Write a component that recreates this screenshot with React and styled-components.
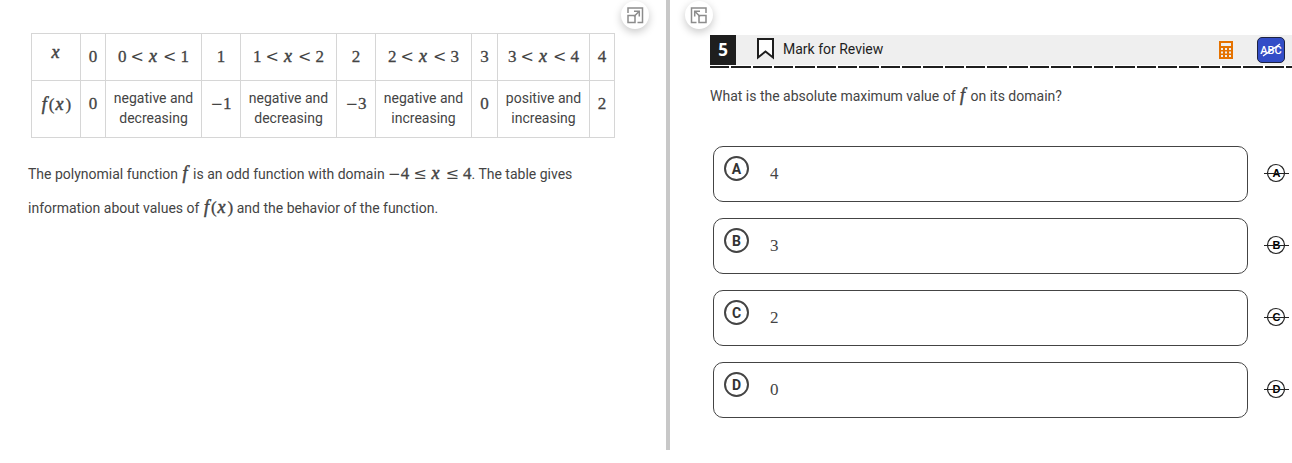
import React, { useState } from 'react';
import styled, { createGlobalStyle } from 'styled-components';

const GlobalStyle = createGlobalStyle`
  * {
    box-sizing: border-box;
  }
  body {
    margin: 0;
    background: #fff;
    color: #444;
    font-family: Roboto, sans-serif;
    font-size: 14px;
  }
  button {
    font-family: inherit;
    cursor: pointer;
  }
`;

const Page = styled.div`
  display: grid;
  grid-template-columns: 666fr 4px 622fr;
`;

const Divider = styled.div`
  background: #c8c8c8;
`;

const Panel = styled.section`
  min-width: 0;
`;

const PanelTop = styled.div`
  display: flex;
  justify-content: ${(props) => props.$align};
  height: ${(props) => props.$height};
  padding: 1px 17px 0 15px;
`;

const RoundButton = styled.button`
  display: grid;
  place-items: center;
  width: 28px;
  height: 28px;
  padding: 0;
  border: 0;
  border-radius: 50%;
  background: #fff;
  box-shadow: 0 3px 8px rgba(0, 0, 0, 0.22);
`;

const ValueTable = styled.table`
  width: 584px;
  max-width: 100%;
  margin-left: 31px;
  border-collapse: collapse;
  table-layout: fixed;
`;

const Column = styled.col`
  width: ${(props) => props.$width}px;
`;

const Row = styled.tr`
  height: ${(props) => props.$height};
`;

const Cell = styled.td`
  padding: 0 0 ${(props) => props.$lift || 0}px;
  border: 1px solid #d6d6d6;
  font-weight: 400;
  line-height: 20px;
  text-align: center;
  white-space: nowrap;
`;

const MathText = styled.span`
  font-family: 'Liberation Serif', serif;
  font-size: 17px;
  line-height: 20px;
  white-space: nowrap;
  -webkit-text-stroke: ${(props) => (props.$light ? '0' : '0.3px')} #444;
`;

const Variable = styled.i`
  margin: 0 2px 0 1px;
  font-size: 18px;
  line-height: 0;
  -webkit-text-stroke: 0.5px #444;
`;

const Relation = styled.span`
  margin: 0 4px;
  font-family: 'DejaVu Serif', serif;
  font-size: 16px;
  line-height: 0;
  -webkit-text-stroke: 0;
`;

const Minus = styled.span`
  font-family: 'DejaVu Serif', serif;
  font-size: 15px;
  line-height: 0;
  -webkit-text-stroke: 0;
`;

const Passage = styled.p`
  margin: 19px 0 0 28px;
  line-height: 34px;
`;

const QuestionHeader = styled.header`
  margin-left: 40px;
  padding-bottom: 3px;
  background: repeating-linear-gradient(
      to right,
      #1e1e1e 0 19px,
      #fff 19px 21px,
      #1e1e1e 21px 41px,
      #fff 41px 43px,
      #1e1e1e 43px 62px,
      #fff 62px 64px
    )
    bottom / 100% 2px no-repeat;
`;

const HeaderBar = styled.div`
  display: flex;
  align-items: center;
  height: 30px;
  padding-right: 7px;
  background: #efefef;
`;

const QuestionNumber = styled.div`
  width: 26px;
  margin-right: 20px;
  background: #1e1e1e;
  color: #fff;
  font-family: 'Noto Sans', sans-serif;
  font-size: 17px;
  font-weight: 700;
  line-height: 30px;
  text-align: center;
`;

const MarkButton = styled.button`
  display: flex;
  align-items: center;
  gap: 8px;
  margin-right: auto;
  padding: 0 0 2px;
  border: 0;
  background: none;
  color: #1e1e1e;
  font-size: 14px;
`;

const ToolButton = styled.button`
  display: grid;
  padding: 0;
  border: 0;
  background: none;
`;

const EliminateButton = styled.button`
  display: grid;
  place-items: center;
  width: 28px;
  height: 26px;
  margin-left: 24px;
  padding: 0;
  border: 1px solid #1e2340;
  border-radius: 5px;
  background: #324dc7;
  color: #fff;
  font-size: 11px;
  font-weight: 500;

  > * {
    grid-area: 1 / 1;
  }
`;

const Question = styled.p`
  margin: 18px 0 0 40px;
  line-height: 20px;
`;

const Choices = styled.div`
  display: grid;
  gap: 16px;
  margin: 40px 3px 32px 43px;
`;

const ChoiceRow = styled.div`
  display: grid;
  grid-template-columns: 1fr 25px;
  align-items: center;
  gap: 16px;
`;

const ChoiceBox = styled.label`
  display: grid;
  grid-template-columns: 25px 1fr;
  align-items: center;
  column-gap: 21px;
  height: 56px;
  padding: 0 10px;
  border: 1px solid #444;
  border-radius: 10px;
  cursor: pointer;
`;

const Bubble = styled.span`
  display: grid;
  place-items: center;
  height: 25px;
  margin-bottom: 11px;
  color: #333;
  font-size: 14px;
  font-weight: 700;
  line-height: 14px;

  > * {
    grid-area: 1 / 1;
  }
`;

const Radio = styled.input`
  width: 25px;
  height: 25px;
  margin: 0;
  appearance: none;
  border: 2px solid #444;
  border-radius: 50%;

  &:checked {
    background: #dfe4fa;
  }
`;

const StrikeButton = styled.button`
  display: grid;
  place-items: center;
  height: 20px;
  margin-bottom: 2px;
  padding: 0;
  border: 0;
  background: none;
  color: #000;
  font-family: 'Liberation Sans', sans-serif;
  font-size: 11px;
  font-weight: 700;

  > * {
    grid-area: 1 / 1;
  }
`;

const X = () => <Variable>x</Variable>;

const Fx = () => (
  <MathText><Variable>f</Variable>(<X />)</MathText>
);

const Interval = ({ from, to }) => (
  <MathText>{from}<Relation>&lt;</Relation><X /><Relation>&lt;</Relation>{to}</MathText>
);

const ExpandIcon = ({ flipped }) => (
  <svg width="18" height="18" viewBox="0 0 18 18" fill="none" stroke="#8c8c8c" strokeWidth="1.5" aria-hidden="true">
    <g transform={flipped ? 'matrix(-1 0 0 1 18 0)' : undefined}>
      <path d="M2 7V2h14.5v14.5h-5" />
      <path d="M2 9.5h7v7H2z" />
      <path d="M8 10.5l5-5M8 5.2h5.3v5.3" />
    </g>
  </svg>
);

const BookmarkIcon = () => (
  <svg width="19" height="22" viewBox="0 0 19 22" fill="#fff" stroke="#1e1e1e" strokeWidth="2" aria-hidden="true">
    <path d="M2 1h15v18.5l-7.5-6-7.5 6z" />
  </svg>
);

const CalculatorIcon = () => (
  <svg width="14" height="18" viewBox="0 0 14 18" aria-hidden="true">
    <path fill="#e57200" d="M0 0h14v18H0z" />
    <path
      fill="#efefef"
      d="M2 2h10v3H2zM2 7h2v2H2zM6 7h2v2H6zM10 7h2v2h-2zM2 10.5h2v2H2zM6 10.5h2v2H6zM10 10.5h2v2h-2zM2 14h2v2H2zM6 14h2v2H6zM10 14h2v2h-2z"
    />
  </svg>
);

const columns = [49, 25, 96, 39, 96, 39, 96, 26, 92, 25];

const behaviors = [
  { from: 0, to: 1, sign: 'negative', trend: 'decreasing', value: <><Minus>−</Minus>1</> },
  { from: 1, to: 2, sign: 'negative', trend: 'decreasing', value: <><Minus>−</Minus>3</> },
  { from: 2, to: 3, sign: 'negative', trend: 'increasing', value: 0 },
  { from: 3, to: 4, sign: 'positive', trend: 'increasing', value: 2 },
];

const choices = [
  { letter: 'A', value: 4 },
  { letter: 'B', value: 3 },
  { letter: 'C', value: 2 },
  { letter: 'D', value: 0 },
];

const FunctionTable = () => (
  <ValueTable>
    <colgroup>
      {columns.map((width, i) => <Column key={i} $width={width} />)}
    </colgroup>
    <tbody>
      <Row $height="47px">
        <Cell as="th" scope="row" $lift={8}><MathText><X /></MathText></Cell>
        <Cell><MathText>0</MathText></Cell>
        {behaviors.map(({ from, to }) => (
          <React.Fragment key={from}>
            <Cell><Interval from={from} to={to} /></Cell>
            <Cell><MathText>{to}</MathText></Cell>
          </React.Fragment>
        ))}
      </Row>
      <Row $height="57px">
        <Cell as="th" scope="row" $lift={8}><Fx /></Cell>
        <Cell $lift={10}><MathText>0</MathText></Cell>
        {behaviors.map(({ from, sign, trend, value }) => (
          <React.Fragment key={from}>
            <Cell $lift={2}>{sign} and<br />{trend}</Cell>
            <Cell $lift={10}><MathText>{value}</MathText></Cell>
          </React.Fragment>
        ))}
      </Row>
    </tbody>
  </ValueTable>
);

const Choice = ({ letter, value, selected, onSelect }) => (
  <ChoiceRow>
    <ChoiceBox>
      <Bubble>
        <Radio type="radio" name="answer" checked={selected} onChange={onSelect} />
        <span>{letter}</span>
      </Bubble>
      <MathText $light>{value}</MathText>
    </ChoiceBox>
    <StrikeButton type="button">
      <span>{letter}</span>
      <svg width="25" height="20" viewBox="0 0 25 20" fill="none" stroke="#222" aria-hidden="true">
        <circle cx="12" cy="10" r="8.5" strokeWidth="1.2" />
        <path d="M0 10.5h25" />
      </svg>
    </StrikeButton>
  </ChoiceRow>
);

const App = () => {
  const [answer, setAnswer] = useState(null);

  return (
    <>
      <GlobalStyle />
      <Page>
        <Panel>
          <PanelTop $align="flex-end" $height="33px">
            <RoundButton type="button" aria-label="Expand"><ExpandIcon /></RoundButton>
          </PanelTop>
          <FunctionTable />
          <Passage>
            The polynomial function <MathText><Variable>f</Variable></MathText> is an odd function with domain{' '}
            <MathText><Minus>−</Minus>4<Relation>≤</Relation><X /><Relation>≤</Relation>4</MathText>. The table gives
            <br />
            information about values of <Fx /> and the behavior of the function.
          </Passage>
        </Panel>
        <Divider />
        <Panel>
          <PanelTop $align="flex-start" $height="35px">
            <RoundButton type="button" aria-label="Expand"><ExpandIcon flipped /></RoundButton>
          </PanelTop>
          <QuestionHeader>
            <HeaderBar>
              <QuestionNumber>5</QuestionNumber>
              <MarkButton type="button"><BookmarkIcon />Mark for Review</MarkButton>
              <ToolButton type="button" aria-label="Calculator"><CalculatorIcon /></ToolButton>
              <EliminateButton type="button">
                <span>ABC</span>
                <svg width="22" height="20" viewBox="0 0 22 20" stroke="#fff" strokeWidth="1.4" aria-hidden="true">
                  <path d="M3 16L20 4" />
                </svg>
              </EliminateButton>
            </HeaderBar>
          </QuestionHeader>
          <Question>
            What is the absolute maximum value of <MathText><Variable>f</Variable></MathText> on its domain?
          </Question>
          <Choices>
            {choices.map(({ letter, value }) => (
              <Choice
                key={letter}
                letter={letter}
                value={value}
                selected={answer === letter}
                onSelect={() => setAnswer(letter)}
              />
            ))}
          </Choices>
        </Panel>
      </Page>
    </>
  );
};

export default App;
